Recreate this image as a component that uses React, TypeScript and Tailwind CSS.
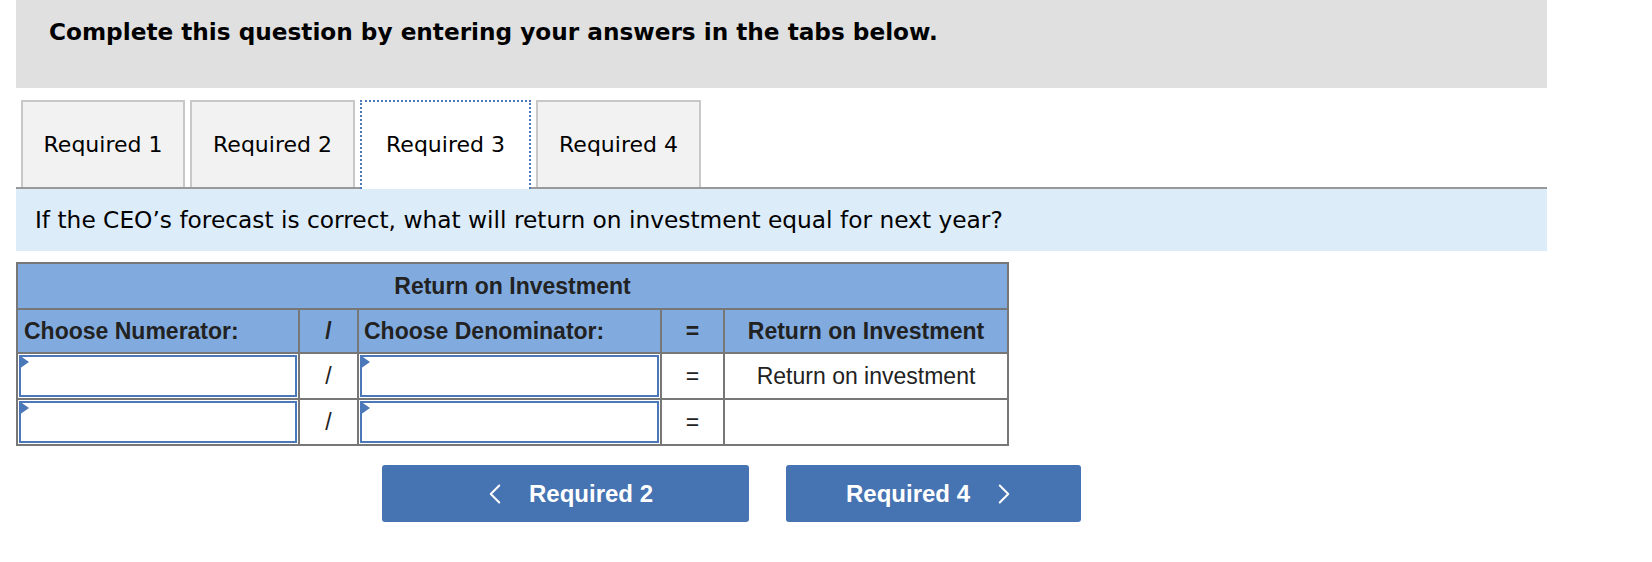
import { ChevronLeft, ChevronRight } from "lucide-react";

const verdana = "font-['Verdana','DejaVu_Sans',sans-serif]";
const arial = "font-['Liberation_Sans',Arial,sans-serif]";

const tabs = [
  { label: "Required 1", w: "w-[164px]" },
  { label: "Required 2", w: "w-[165px]" },
  { label: "Required 3", w: "w-[171px]" },
  { label: "Required 4", w: "w-[165px]" },
];

function AnswerInput() {
  return (
    <div className="relative h-[42px] w-full border-2 border-[#4a78b8] bg-white">
      <span className="absolute -left-[2px] -top-[2px] h-0 w-0 border-y-[7px] border-l-[10px] border-y-transparent border-l-[#4a78b8]" />
    </div>
  );
}

export default function App() {
  return (
    <div className="min-h-screen bg-white">
      <div className="ml-[16px] w-[1531px]">
        <div className="h-[88px] bg-[#e0e0e0] pl-[33px] pt-[20px]">
          <h1 className={`${verdana} text-[23.2px] font-bold leading-none text-black`}>
            Complete this question by entering your answers in the tabs below.
          </h1>
        </div>

        <div className="mt-[12px] flex gap-[5px] border-b-2 border-[#999] pl-[5px]">
          {tabs.map((t, i) => {
            const active = i === 2;
            return (
              <div
                key={t.label}
                className={
                  active
                    ? `-mb-[2px] flex h-[89px] ${t.w} items-center justify-center border-2 border-b-0 border-dotted border-[#4a78b8] bg-white ${verdana} text-[22px] text-black`
                    : `flex h-[87px] ${t.w} items-center justify-center border-2 border-b-0 border-[#c8c8c8] bg-[#f2f2f2] ${verdana} text-[22px] text-black`
                }
              >
                <span className={active ? "-mt-[2px]" : ""}>{t.label}</span>
              </div>
            );
          })}
        </div>

        <div className="flex h-[62px] items-center bg-[#ddecf9] pl-[19px]">
          <p className={`${verdana} text-[23.3px] text-black`}>
            If the CEO’s forecast is correct, what will return on investment equal for next year?
          </p>
        </div>

        <table className={`mt-[11px] w-[991px] table-fixed border-collapse ${arial} text-[23px] text-[#222]`}>
          <colgroup>
            <col className="w-[282px]" />
            <col className="w-[59px]" />
            <col className="w-[303px]" />
            <col className="w-[63px]" />
            <col className="w-[284px]" />
          </colgroup>
          <thead>
            <tr className="h-[46px] bg-[#81abdf]">
              <th colSpan={5} className="border-2 border-[#777] text-center font-bold">
                Return on Investment
              </th>
            </tr>
            <tr className="h-[44px] bg-[#81abdf]">
              <th className="border-2 border-[#777] pl-[6px] text-left font-bold">Choose Numerator:</th>
              <th className="border-2 border-[#777] text-center font-bold">/</th>
              <th className="border-2 border-[#777] pl-[5px] text-left font-bold">Choose Denominator:</th>
              <th className="border-2 border-[#777] text-center font-bold">=</th>
              <th className="border-2 border-[#777] text-center font-bold">Return on Investment</th>
            </tr>
          </thead>
          <tbody className="bg-white">
            {[0, 1].map((r) => (
              <tr key={r} className="h-[46px]">
                <td className="border-2 border-[#777] p-[1px]">
                  <AnswerInput />
                </td>
                <td className="border-2 border-[#777] text-center">/</td>
                <td className="border-2 border-[#777] p-[1px]">
                  <AnswerInput />
                </td>
                <td className="border-2 border-[#777] text-center">=</td>
                <td className="border-2 border-[#777] text-center">{r === 0 ? "Return on investment" : ""}</td>
              </tr>
            ))}
          </tbody>
        </table>

        <div className="mt-[19px] flex gap-[37px] pl-[366px]">
          <button className={`flex h-[57px] w-[367px] items-center justify-center gap-[17px] rounded-[3px] bg-[#4673b2] ${arial} text-[24px] font-bold text-white`}>
            <ChevronLeft className="h-[34px] w-[34px]" strokeWidth={1.4} />
            <span>Required 2</span>
          </button>
          <button className={`flex h-[57px] w-[295px] items-center justify-center gap-[17px] rounded-[3px] bg-[#4673b2] ${arial} text-[24px] font-bold text-white`}>
            <span>Required 4</span>
            <ChevronRight className="h-[34px] w-[34px]" strokeWidth={1.4} />
          </button>
        </div>
      </div>
    </div>
  );
}
